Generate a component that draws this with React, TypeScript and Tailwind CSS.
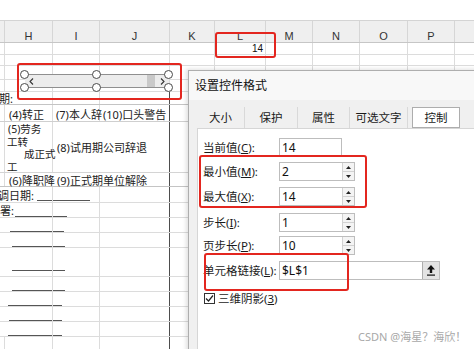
import React from 'react';

const W = [
  'w-[5px]',
  'w-[48px]',
  'w-[47px]',
  'w-[70px]',
  'w-[45px]',
  'w-[51px]',
  'w-[47px]',
  'w-[47px]',
  'w-[48px]',
  'w-[47px]',
  'w-[40px]',
];
const LETTERS = ['', 'H', 'I', 'J', 'K', 'L', 'M', 'N', 'O', 'P', ''];

type R = 'g' | 'd' | 'n';
const RCLS: Record<R, string> = {
  g: 'border-r border-r-[#dcdcdc]',
  d: 'border-r border-r-[#4d4d4d]',
  n: 'border-r border-r-transparent',
};

function C({
  i,
  w,
  r = 'g',
  children,
  className = '',
}: {
  i?: number;
  w?: string;
  r?: R;
  children?: React.ReactNode;
  className?: string;
}) {
  const width = w ?? W[i ?? 0];
  return <div className={`${width} shrink-0 h-full ${RCLS[r]} ${className}`}>{children}</div>;
}

function span(a: number, b: number, darkJ = false) {
  const out: React.ReactNode[] = [];
  for (let k = a; k < b; k++) out.push(<C key={k} i={k} r={darkJ && k === 3 ? 'd' : 'g'} />);
  return out;
}

function Row({ h, line = 'border-b-[#dcdcdc]', children }: { h: string; line?: string; children: React.ReactNode }) {
  return <div className={`flex ${h} border-b ${line}`}>{children}</div>;
}

function Txt({ children, className = '' }: { children: React.ReactNode; className?: string }) {
  return (
    <div className={`h-full flex items-center whitespace-nowrap text-[11px] leading-none text-[#222] ${className}`}>
      {children}
    </div>
  );
}

function ULine({ ml, w, pb = 'pb-[0px]' }: { ml: string; w: string; pb?: string }) {
  return (
    <div className={`h-full flex flex-col justify-end ${pb}`}>
      <div className={`${ml} ${w} border-b border-b-[#555]`} />
    </div>
  );
}

function Handle({ pos }: { pos: string }) {
  return <div className={`absolute ${pos} w-[9px] h-[9px] rounded-full border-[1.5px] border-[#4a4a4a] bg-white`} />;
}

function Red({ pos }: { pos: string }) {
  return <div className={`absolute ${pos} border-2 border-[#e3261f] rounded-[3px]`} />;
}

function Spinner() {
  return (
    <div className="w-[12px] h-full flex flex-col border-l border-l-[#d2d2d2] bg-[#f4f4f4]">
      <div className="flex-1 flex items-center justify-center border-b border-b-[#d2d2d2]">
        <svg width="5" height="3" viewBox="0 0 5 3">
          <path d="M0 3 L2.5 0 L5 3Z" fill="#222" />
        </svg>
      </div>
      <div className="flex-1 flex items-center justify-center">
        <svg width="5" height="3" viewBox="0 0 5 3">
          <path d="M0 0 L5 0 L2.5 3Z" fill="#222" />
        </svg>
      </div>
    </div>
  );
}

function Field({
  label,
  mt,
  children,
}: {
  label: React.ReactNode;
  mt: string;
  children: React.ReactNode;
}) {
  return (
    <div className={`flex items-center h-[19px] ${mt}`}>
      <div className="w-[76px] text-[11.5px] leading-none text-[#1a1a1a] whitespace-nowrap">{label}</div>
      {children}
    </div>
  );
}

function Input({ w, value, spin }: { w: string; value: string; spin?: boolean }) {
  return (
    <div className={`${w} h-full flex border border-[#bdbdbd] bg-white`}>
      <div className="flex-1 flex items-center pl-[2px] text-[12px] leading-none text-[#111]">{value}</div>
      {spin && <Spinner />}
    </div>
  );
}

function Tab({ w, label }: { w: string; label: string }) {
  return (
    <div
      className={`${w} h-[21px] flex items-center justify-center border-r border-r-[#d9d9d9] text-[11.5px] leading-none text-[#1a1a1a]`}
    >
      {label}
    </div>
  );
}

export default function App() {
  return (
    <div className="relative w-[474px] h-[349px] overflow-hidden bg-white font-['Noto_Sans','Noto_Sans_CJK_SC',sans-serif] text-[#222]">
      {/* spreadsheet */}
      <div className="flex flex-col">
        <div className="h-[20px] bg-white" />
        <div className="flex h-[23px] bg-[#efefef] border-t border-t-[#d4d4d4] border-b border-b-[#c6c6c6]">
          {LETTERS.map((l, k) => (
            <div
              key={k}
              className={`${W[k]} shrink-0 border-r border-r-[#d6d6d6] text-center text-[11px] leading-none pt-[10px] text-[#333] font-['Liberation_Sans',sans-serif]`}
            >
              {l}
            </div>
          ))}
        </div>

        <Row h="h-[12px]">
          {span(0, 5)}
          <C i={5}>
            <div className="h-full flex items-center justify-end pr-[2px] text-[10px] leading-none font-['Liberation_Sans',sans-serif] text-[#111]">
              14
            </div>
          </C>
          {span(6, 11)}
        </Row>
        <Row h="h-[11px]">{span(0, 11)}</Row>
        <Row h="h-[14px]">{span(0, 11)}</Row>
        <Row h="h-[12px]">{span(0, 11)}</Row>

        <Row h="h-[13px]" line="border-b-[#c4c4c4]">
          <C i={0} r="n">
            <Txt className="-ml-[1px] pt-[1px]">期:</Txt>
          </C>
          {span(1, 11, true)}
        </Row>

        <Row h="h-[17px]" line="border-b-[#cfcfcf]">
          <C i={0} />
          <C i={1}>
            <Txt className="pl-[4px] pt-[2px]">(4)转正</Txt>
          </C>
          <C i={2}>
            <Txt className="pl-[3px] pt-[2px] text-[10.5px]">(7)本人辞</Txt>
          </C>
          <C i={3} r="d">
            <Txt className="pl-[3px] pt-[2px] text-[10.5px]">(10)口头警告</Txt>
          </C>
          {span(4, 11)}
        </Row>

        <Row h="h-[51px]" line="border-b-[#d4d4d4]">
          <C i={0} />
          <C i={1}>
            <div className="flex flex-col pt-[1px] text-[10.5px] leading-[12.5px] whitespace-nowrap text-[#222]">
              <span className="pl-[3px]">(5)劳务</span>
              <span className="pl-[2px]">工转</span>
              <span className="pl-[19px]">成正式</span>
              <span className="pl-[2px]">工</span>
            </div>
          </C>
          <C w="w-[117px]" r="d">
            <Txt className="pl-[4px] pt-[1px]">(8)试用期公司辞退</Txt>
          </C>
          {span(4, 11)}
        </Row>

        <Row h="h-[14px]" line="border-b-[#c4c4c4]">
          <C i={0} />
          <C i={1} r="n">
            <Txt className="pl-[4px] pt-[1px] text-[10.5px]">(6)降职降</Txt>
          </C>
          <C w="w-[117px]" r="d">
            <Txt className="pl-[4px] pt-[1px]">(9)正式期单位解除</Txt>
          </C>
          {span(4, 11)}
        </Row>

        <Row h="h-[16px]">
          <C i={0} r="n">
            <div className="h-full flex items-stretch whitespace-nowrap">
              <Txt className="-ml-[2px] pt-[2px]">调日期:</Txt>
              <div className="h-full flex flex-col justify-end pb-[1px]">
                <div className="ml-[3px] w-[53px] border-b border-b-[#555]" />
              </div>
            </div>
          </C>
          {span(1, 11, true)}
        </Row>

        <Row h="h-[15px]">
          <C i={0} r="n">
            <div className="h-full flex items-stretch whitespace-nowrap">
              <Txt className="pt-[1px]">署:</Txt>
              <div className="h-full flex flex-col justify-end">
                <div className="ml-[1px] w-[52px] border-b border-b-[#555]" />
              </div>
            </div>
          </C>
          {span(1, 11, true)}
        </Row>

        <Row h="h-[15px]">
          <C i={0} r="n">
            <ULine ml="ml-[10px]" w="w-[54px]" />
          </C>
          {span(1, 11, true)}
        </Row>
        <Row h="h-[15px]">
          <C i={0} r="n">
            <ULine ml="ml-[12px]" w="w-[53px]" />
          </C>
          {span(1, 11, true)}
        </Row>
        <Row h="h-[29px]">
          <C i={0} r="n">
            <ULine ml="ml-[12px]" w="w-[53px]" pb="pb-[5px]" />
          </C>
          {span(1, 11, true)}
        </Row>
        <Row h="h-[15px]">
          <C i={0} r="n">
            <ULine ml="ml-[12px]" w="w-[53px]" />
          </C>
          {span(1, 11, true)}
        </Row>
        <Row h="h-[15px]">
          <C i={0} r="n">
            <ULine ml="ml-[8px]" w="w-[54px]" />
          </C>
          {span(1, 11, true)}
        </Row>
        <Row h="h-[15px]">
          <C i={0} r="n">
            <ULine ml="ml-[9px]" w="w-[53px]" />
          </C>
          {span(1, 11, true)}
        </Row>
        <Row h="h-[15px]">
          <C i={0} r="n">
            <ULine ml="ml-[8px]" w="w-[54px]" />
          </C>
          {span(1, 11, true)}
        </Row>
        <Row h="h-[20px]">{span(0, 11, true)}</Row>
      </div>

      {/* scrollbar form control */}
      <div className="absolute left-[25px] top-[74px] w-[144px] h-[14px] border-y border-y-[#8f8f8f] bg-[#ececec] flex items-stretch">
        <div className="w-[12px] flex items-center justify-center pt-[1px]">
          <svg width="5" height="7" viewBox="0 0 5 7">
            <path d="M4 0.5 L1 3.5 L4 6.5" fill="none" stroke="#333" strokeWidth="1.1" />
          </svg>
        </div>
        <div className="w-[110px]" />
        <div className="w-[8px] bg-[#c9c9c9]" />
        <div className="flex-1 flex items-center justify-center pt-[1px]">
          <svg width="5" height="7" viewBox="0 0 5 7">
            <path d="M1 0.5 L4 3.5 L1 6.5" fill="none" stroke="#333" strokeWidth="1.1" />
          </svg>
        </div>
      </div>
      <Handle pos="left-[20px] top-[70px]" />
      <Handle pos="left-[92px] top-[70px]" />
      <Handle pos="left-[164px] top-[70px]" />
      <Handle pos="left-[20px] top-[83px]" />
      <Handle pos="left-[92px] top-[83px]" />
      <Handle pos="left-[164px] top-[83px]" />

      {/* dialog */}
      <div className="absolute left-[188px] top-[70px] w-[292px] h-[285px] bg-[#f0f0f0] border-l border-t border-[#aeaeae] shadow-[-2px_-1px_4px_rgba(0,0,0,0.12)] flex flex-col">
        <div className="h-[29px] bg-[#f8f8f8] flex items-center pl-[6px] text-[12px] leading-none text-[#111]">
          设置控件格式
        </div>
        <div className="flex-1 flex flex-col pl-[8px]">
          <div className="h-[28px] flex items-end">
            <Tab w="w-[48px]" label="大小" />
            <Tab w="w-[53px]" label="保护" />
            <Tab w="w-[52px]" label="属性" />
            <Tab w="w-[58px]" label="可选文字" />
            <div className="ml-[4px] w-[48px] h-[21px] flex items-center justify-center border border-[#adadad] bg-white text-[11.5px] leading-none text-[#1a1a1a]">
              控制
            </div>
          </div>
          <div className="flex-1 bg-white border-l border-t border-[#d6d6d6] flex flex-col pl-[5px] pt-[9px]">
            <Field
              mt="mt-0"
              label={
                <>
                  当前值(<span className="underline">C</span>):
                </>
              }
            >
              <Input w="w-[63px]" value="14" />
            </Field>
            <Field
              mt="mt-[5px]"
              label={
                <>
                  最小值(<span className="underline">M</span>):
                </>
              }
            >
              <Input w="w-[76px]" value="2" spin />
            </Field>
            <Field
              mt="mt-[6px]"
              label={
                <>
                  最大值(<span className="underline">X</span>):
                </>
              }
            >
              <Input w="w-[76px]" value="14" spin />
            </Field>
            <Field
              mt="mt-[7px]"
              label={
                <>
                  步长(<span className="underline">I</span>):
                </>
              }
            >
              <Input w="w-[76px]" value="1" spin />
            </Field>
            <Field
              mt="mt-[4px]"
              label={
                <>
                  页步长(<span className="underline">P</span>):
                </>
              }
            >
              <Input w="w-[76px]" value="10" spin />
            </Field>
            <Field
              mt="mt-[6px]"
              label={
                <>
                  单元格链接(<span className="underline">L</span>):
                </>
              }
            >
              <div className="w-[161px] h-full flex border border-[#bdbdbd] bg-white">
                <div className="flex-1 flex items-center pl-[2px] text-[12px] leading-none text-[#111]">$L$1</div>
                <div className="w-[17px] flex items-center justify-center border-l border-l-[#adadad] bg-[#e3e3e3]">
                  <svg width="8" height="11" viewBox="0 0 8 11">
                    <path d="M4 0 L8 4.5 L5.2 4.5 L5.2 8 L2.8 8 L2.8 4.5 L0 4.5Z" fill="#111" />
                    <rect x="0" y="9.5" width="8" height="1.2" fill="#111" />
                  </svg>
                </div>
              </div>
            </Field>
            <div className="mt-[13px] flex items-center h-[11px] pl-[1px]">
              <div className="w-[11px] h-[11px] border border-[#333] bg-white flex items-center justify-center">
                <svg width="9" height="9" viewBox="0 0 9 9">
                  <path d="M1 4.5 L3.5 7 L8 1.5" fill="none" stroke="#222" strokeWidth="1.2" />
                </svg>
              </div>
              <div className="ml-[3px] text-[11.5px] leading-none text-[#1a1a1a]">
                三维阴影(<span className="underline">3</span>)
              </div>
            </div>
          </div>
        </div>
      </div>

      {/* watermark */}
      <div className="absolute left-[358px] top-[331px] text-[11px] leading-none text-[#a8a8a8] whitespace-nowrap">
        CSDN @海星？海欣！
      </div>

      {/* red annotation boxes */}
      <Red pos="left-[215px] top-[32px] w-[61px] h-[26px]" />
      <Red pos="left-[17px] top-[63px] w-[165px] h-[37px]" />
      <Red pos="left-[199px] top-[155px] w-[168px] h-[53px]" />
      <Red pos="left-[204px] top-[253px] w-[145px] h-[38px]" />
    </div>
  );
}
